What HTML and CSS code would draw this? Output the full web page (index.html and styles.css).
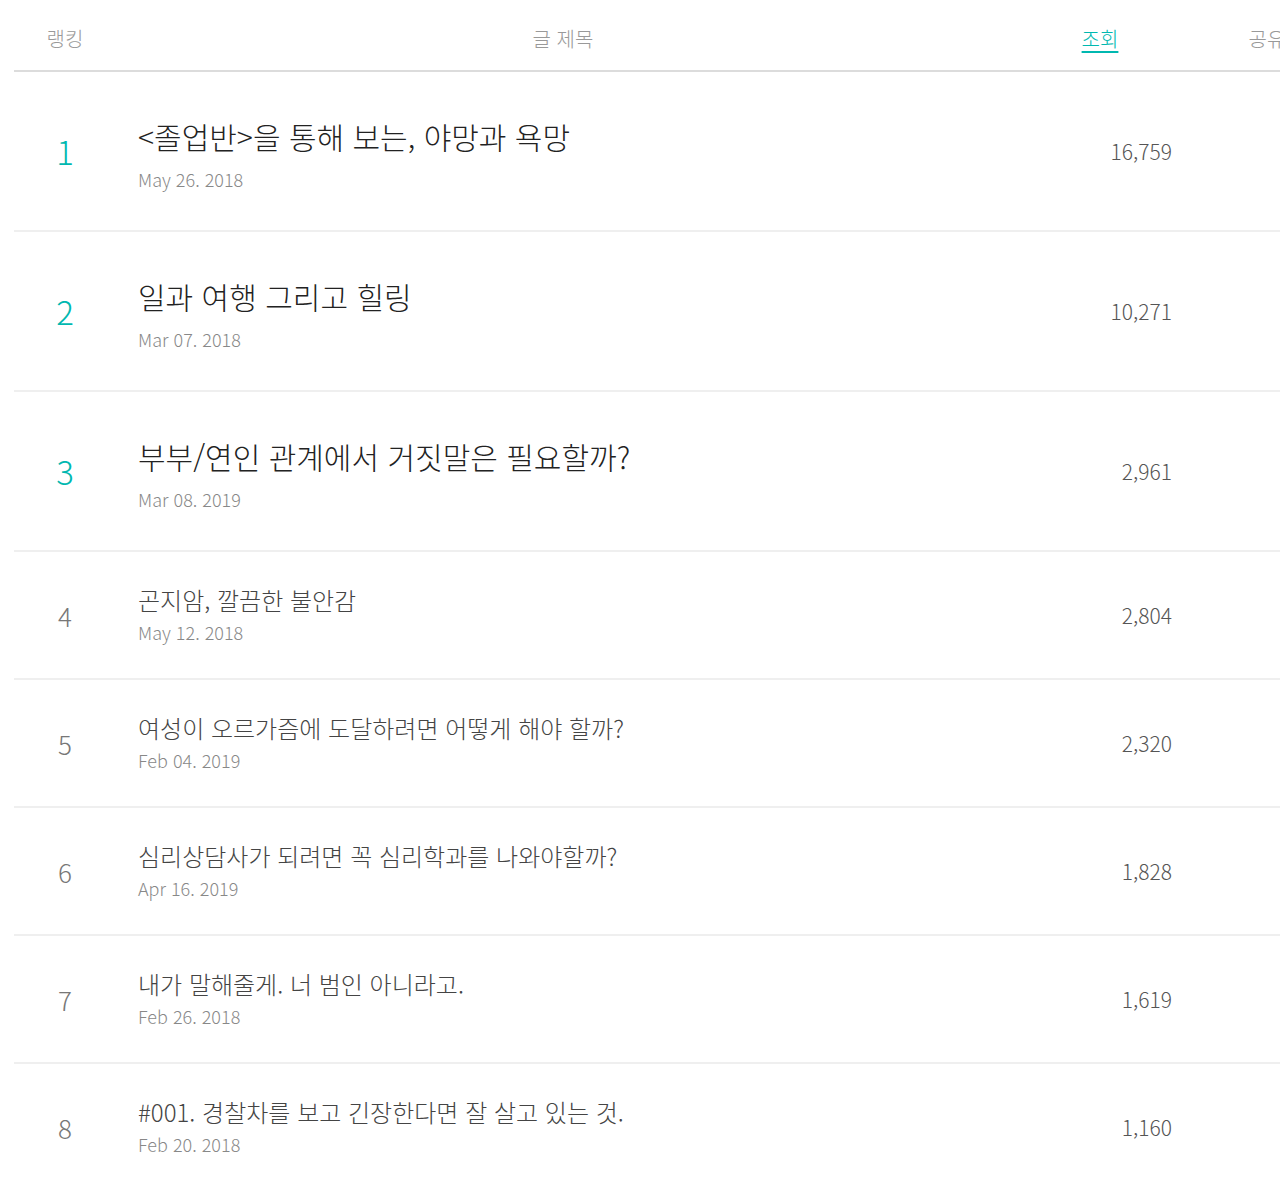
FILE: index.html
```html
<!DOCTYPE html>
<html lang="ko">
<head>
<meta charset="utf-8">
<link rel="stylesheet" href="styles.css">
</head>
<body>
<div class="wrap">
<table class="rank-table">
  <colgroup>
    <col class="c-rank"><col class="c-title"><col class="c-views"><col class="c-share">
  </colgroup>
  <thead>
    <tr>
      <th>랭킹</th>
      <th>글 제목</th>
      <th><a class="sort-active" href="#">조회</a></th>
      <th>공유</th>
    </tr>
  </thead>
  <tbody>
    <tr class="top">
      <td class="rank">1</td>
      <td class="title"><div class="t">&lt;졸업반&gt;을 통해 보는, 야망과 욕망</div><div class="d">May 26. 2018</div></td>
      <td class="views">16,759</td><td></td>
    </tr>
    <tr class="top">
      <td class="rank">2</td>
      <td class="title"><div class="t">일과 여행 그리고 힐링</div><div class="d">Mar 07. 2018</div></td>
      <td class="views">10,271</td><td></td>
    </tr>
    <tr class="top">
      <td class="rank">3</td>
      <td class="title"><div class="t">부부/연인 관계에서 거짓말은 필요할까?</div><div class="d">Mar 08. 2019</div></td>
      <td class="views">2,961</td><td></td>
    </tr>
    <tr>
      <td class="rank">4</td>
      <td class="title"><div class="t">곤지암, 깔끔한 불안감</div><div class="d">May 12. 2018</div></td>
      <td class="views">2,804</td><td></td>
    </tr>
    <tr>
      <td class="rank">5</td>
      <td class="title"><div class="t">여성이 오르가즘에 도달하려면 어떻게 해야 할까?</div><div class="d">Feb 04. 2019</div></td>
      <td class="views">2,320</td><td></td>
    </tr>
    <tr>
      <td class="rank">6</td>
      <td class="title"><div class="t">심리상담사가 되려면 꼭 심리학과를 나와야할까?</div><div class="d">Apr 16. 2019</div></td>
      <td class="views">1,828</td><td></td>
    </tr>
    <tr>
      <td class="rank">7</td>
      <td class="title"><div class="t">내가 말해줄게. 너 범인 아니라고.</div><div class="d">Feb 26. 2018</div></td>
      <td class="views">1,619</td><td></td>
    </tr>
    <tr>
      <td class="rank">8</td>
      <td class="title"><div class="t">#001. 경찰차를 보고 긴장한다면 잘 살고 있는 것.</div><div class="d">Feb 20. 2018</div></td>
      <td class="views">1,160</td><td></td>
    </tr>
  </tbody>
</table>
</div>
</body>
</html>
```
FILE: styles.css
```css
html, body {
  margin: 0;
  padding: 0;
  background: #fff;
  overflow: hidden;
}
body {
  font-family: "Noto Sans CJK KR", "Noto Sans", sans-serif;
  font-weight: 300;
  color: #333;
}
.wrap {
  padding-left: 14px;
  width: 1330px;
}
.rank-table {
  width: 1330px;
  border-collapse: collapse;
  table-layout: fixed;
}
.c-rank { width: 102px; }
.c-title { width: 894px; }
.c-views { width: 180px; }
.c-share { width: 154px; }

.rank-table th {
  height: 63px;
  padding: 7px 0 0 0;
  font-size: 20px;
  font-weight: 300;
  color: #999;
  text-align: center;
  border-bottom: 2px solid #dcdcdc;
}
.sort-active {
  color: #00b8b0;
  text-decoration: underline;
  text-underline-offset: 4px;
}
.rank-table td {
  border-bottom: 2px solid #efefef;
  height: 126px;
  padding: 0;
  vertical-align: middle;
}
.rank-table tr.top td { height: 158px; }

.rank {
  text-align: center;
  font-size: 26px;
  color: #777;
}
.top .rank {
  font-size: 33px;
  color: #00b8b0;
}
.title {
  padding-left: 22px !important;
}
.title .t {
  font-size: 24px;
  line-height: 30px;
  color: #444;
}
.top .title .t {
  font-size: 30px;
  line-height: 40px;
  color: #222;
  margin-bottom: 10px;
}
.title .d {
  font-size: 18px;
  line-height: 26px;
  color: #888;
  margin-top: 4px;
}
.top .title .d { margin-top: 0; }
.rank-table tr.top td.title { height: 152px; padding-top: 6px !important; }
.views {
  text-align: right;
  padding-right: 18px !important;
  font-size: 21px;
  color: #555;
}
```
